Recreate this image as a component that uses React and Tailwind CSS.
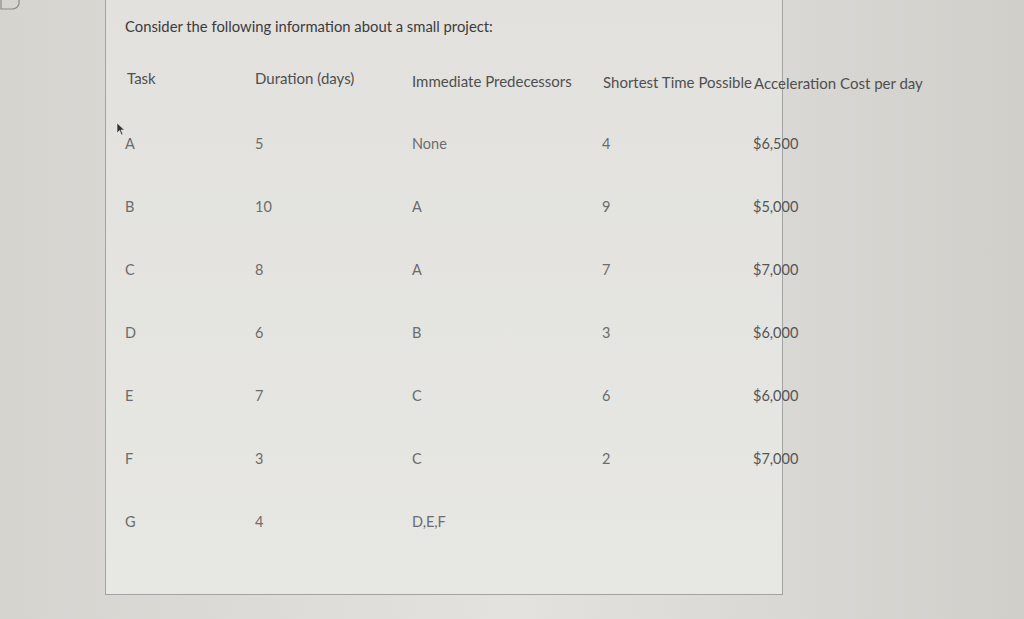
import React from 'react';

const rows = [
  ['A', '5', 'None', '4', '$6,500'],
  ['B', '10', 'A', '9', '$5,000'],
  ['C', '8', 'A', '7', '$7,000'],
  ['D', '6', 'B', '3', '$6,000'],
  ['E', '7', 'C', '6', '$6,000'],
  ['F', '3', 'C', '2', '$7,000'],
  ['G', '4', 'D,E,F', '', ''],
];

const cols = 'grid grid-cols-[130px_157px_190px_151px_1fr]';

const App = () => {
  return (
    <div
      className="relative w-[1024px] h-[619px] overflow-hidden bg-gradient-to-r from-[#d6d4cf] via-[#e3e2df] to-[#d1cfca]"
      style={{ fontFamily: 'Lato, "Open Sans", sans-serif' }}
    >
      {/* corner icon */}
      <svg className="absolute left-0 top-0" width="24" height="12" viewBox="0 0 24 12">
        <path d="M1 0 V9 H12 Q17 9 19 4 V0" fill="none" stroke="#8a8a8a" strokeWidth="1.2" />
      </svg>

      <div className="pl-[105px]">
        <div className="w-[678px] h-[595px] border-l border-r border-b border-[#a3a3a1] bg-gradient-to-b from-[#e2e1de] to-[#e7e7e4] pl-[19px] pt-[17px] text-[#5a5a5a]">
          <div className="text-[14.8px] leading-[18px] text-[#3b3b3b] whitespace-nowrap">
            Consider the following information about a small project:
          </div>

          <div className={`${cols} mt-[34px] text-[15px] leading-[18px] text-[#4f4f4f] whitespace-nowrap`}>
            <div className="pl-[2px]">Task</div>
            <div>Duration (days)</div>
            <div className="pt-[3px]">Immediate Predecessors</div>
            <div className="pt-[4px] pl-[1px]">Shortest Time Possible</div>
            <div className="pt-[5px] pl-[1px]">Acceleration Cost per day</div>
          </div>

          <div className="mt-[43px]">
            {rows.map((r) => (
              <div key={r[0]} className={`${cols} h-[63px] text-[14.5px] leading-[18px] text-[#6c6c6c]`}>
                <div>{r[0]}</div>
                <div>{r[1]}</div>
                <div>{r[2]}</div>
                <div>{r[3]}</div>
                <div className="text-[#555]">{r[4]}</div>
              </div>
            ))}
          </div>
        </div>
      </div>

      {/* mouse cursor */}
      <svg className="absolute left-[116px] top-[122px]" width="10" height="15" viewBox="0 0 10 15">
        <path d="M1 1 L1 11 L3.5 8.5 L5.5 13 L7 12.3 L5 8 L8.5 8 Z" fill="#333" stroke="#eee" strokeWidth="0.6" />
      </svg>
    </div>
  );
};

export default App;
